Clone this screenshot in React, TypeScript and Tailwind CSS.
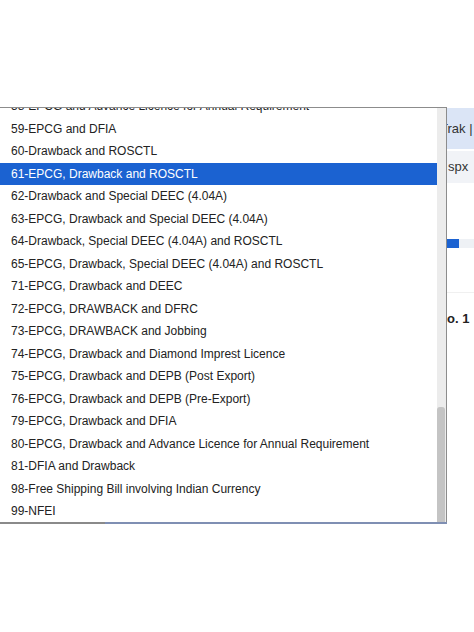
import React from "react";

const items = [
  "58-EPCG and Advance Licence for Annual Requirement",
  "59-EPCG and DFIA",
  "60-Drawback and ROSCTL",
  "61-EPCG, Drawback and ROSCTL",
  "62-Drawback and Special DEEC (4.04A)",
  "63-EPCG, Drawback and Special DEEC (4.04A)",
  "64-Drawback, Special DEEC (4.04A) and ROSCTL",
  "65-EPCG, Drawback, Special DEEC (4.04A) and ROSCTL",
  "71-EPCG, Drawback and DEEC",
  "72-EPCG, DRAWBACK and DFRC",
  "73-EPCG, DRAWBACK and Jobbing",
  "74-EPCG, Drawback and Diamond Imprest Licence",
  "75-EPCG, Drawback and DEPB (Post Export)",
  "76-EPCG, Drawback and DEPB (Pre-Export)",
  "79-EPCG, Drawback and DFIA",
  "80-EPCG, Drawback and Advance Licence for Annual Requirement",
  "81-DFIA and Drawback",
  "98-Free Shipping Bill involving Indian Currency",
  "99-NFEI",
];

export default function App() {
  return (
    <div className="w-[474px] h-[632px] bg-white overflow-hidden font-['Liberation_Sans',Arial,sans-serif] text-[12px]">
      <div className="h-[107px]" />
      <div className="flex">
        <div className="w-[447px] shrink-0 flex flex-col">
          <div className="h-[415px] flex border-t border-r border-[#8c8c8c]">
            <div className="flex-1 overflow-hidden">
              <div className="mt-[-13px]">
                {items.map((t, i) => (
                  <div
                    key={t}
                    className={
                      i === 3
                        ? "h-[22.5px] flex items-center pl-[11px] bg-[#1b62d1] text-white whitespace-nowrap"
                        : "h-[22.5px] flex items-center pl-[11px] text-[#222] whitespace-nowrap"
                    }
                  >
                    {t}
                  </div>
                ))}
              </div>
            </div>
            <div className="w-[9px] bg-[#ececec] flex flex-col justify-end">
              <div className="h-[115px] w-[8px] bg-[#c4c4c4] rounded-t-[3px]" />
            </div>
          </div>
          <div className="flex h-[2px]">
            <div className="w-[105px] bg-[#8a8a8a]" />
            <div className="flex-1 bg-[#7f8fb3]" />
          </div>
        </div>
        <div className="flex-1 overflow-hidden flex flex-col text-[#333] text-[13px] whitespace-nowrap">
          <div className="mt-[1px] h-[41px] bg-[#dbe5f6] flex items-center">
            <span className="ml-[-7px]">Trak |</span>
          </div>
          <div className="mt-[2px] h-[32px] bg-[#f1f3f7] flex items-center">
            <span className="ml-[1px]">spx</span>
          </div>
          <div className="mt-[56px] flex h-[9px]">
            <div className="w-[12px] bg-[#1b62d1]" />
            <div className="flex-1 bg-[#eef1f5]" />
          </div>
          <div className="mt-[44px] h-px bg-[#f0f0f0]" />
          <div className="mt-[16px] font-bold text-[#222]">
            <span className="ml-[0px]">o. 1</span>
          </div>
        </div>
      </div>
    </div>
  );
}
